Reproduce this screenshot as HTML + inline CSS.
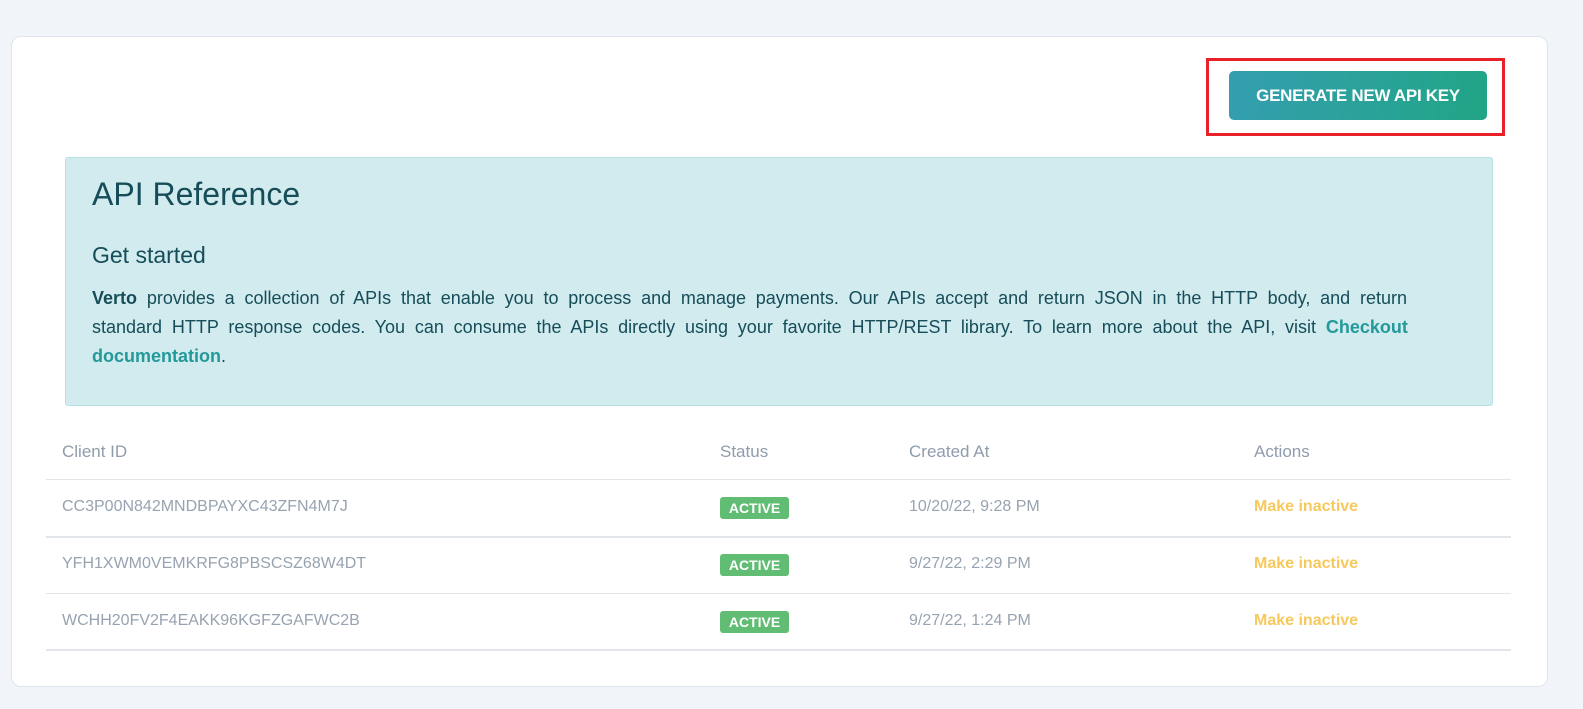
<!DOCTYPE html>
<html><head><style>
body{margin:0;background:#f1f5f9;font-family:"Liberation Sans",sans-serif;width:1583px;height:709px;overflow:hidden;position:relative}
.card{position:absolute;left:11px;top:36px;width:1535px;height:649px;background:#fff;border:1px solid #dfe5ec;border-radius:10px}
.red{position:absolute;left:1206px;top:58px;width:293px;height:72px;border:3px solid #e8202a}
.btn{position:absolute;left:1229px;top:71px;width:258px;height:49px;border-radius:5px;background:linear-gradient(100deg,#349eb0,#21a585);color:#fff;font-weight:bold;font-size:17px;line-height:49px;text-align:center;letter-spacing:-0.3px}
.info{position:absolute;left:65px;top:157px;width:1426px;height:247px;background:#d1ebef;border:1px solid #b7e0e6;border-radius:3px;color:#164d58}
.t{position:absolute;white-space:nowrap}
.hd{color:#8f9cab;font-size:17px}
.cell{color:#97a3b0;font-size:16px}
.badge{position:absolute;background:#62bd74;color:#fff;font-weight:bold;font-size:14px;width:69px;height:22px;line-height:22px;text-align:center;border-radius:3px}
.mk{color:#f7c85b;font-weight:bold;font-size:16px}
.line{position:absolute;left:46px;width:1465px;background:#e2e6eb}
</style></head><body>
<div class="card"></div>
<div class="red"></div>
<div class="btn">GENERATE NEW API KEY</div>
<div class="info"></div>
<div class="t" style="left:92px;top:176px;font-size:32px;color:#164d58">API Reference</div>
<div class="t" style="left:92px;top:242px;font-size:23px;color:#164d58">Get started</div>
<div style="position:absolute;left:92px;top:284px;width:1380px;font-size:18px;line-height:29px;color:#164d58;white-space:nowrap;word-spacing:4.8px"><b>Verto</b> provides a collection of APIs that enable you to process and manage payments. Our APIs accept and return JSON in the HTTP body, and return<br>standard HTTP response codes. You can consume the APIs directly using your favorite HTTP/REST library. To learn more about the API, visit <b style="color:#23999a">Checkout</b><br><b style="color:#23999a">documentation</b>.</div>
<div class="t hd" style="left:62px;top:442px">Client ID</div>
<div class="t hd" style="left:720px;top:442px">Status</div>
<div class="t hd" style="left:909px;top:442px">Created At</div>
<div class="t hd" style="left:1254px;top:442px">Actions</div>
<div class="line" style="top:479px;height:1px"></div>

<div class="t cell" style="left:62px;top:498px">CC3P00N842MNDBPAYXC43ZFN4M7J</div>
<div class="badge" style="left:720px;top:497px">ACTIVE</div>
<div class="t cell" style="left:909px;top:498px">10/20/22, 9:28 PM</div>
<div class="t mk" style="left:1254px;top:498px">Make inactive</div>
<div class="line" style="top:536px;height:2px"></div>

<div class="t cell" style="left:62px;top:555px">YFH1XWM0VEMKRFG8PBSCSZ68W4DT</div>
<div class="badge" style="left:720px;top:554px">ACTIVE</div>
<div class="t cell" style="left:909px;top:555px">9/27/22, 2:29 PM</div>
<div class="t mk" style="left:1254px;top:555px">Make inactive</div>
<div class="line" style="top:593px;height:1px"></div>

<div class="t cell" style="left:62px;top:612px">WCHH20FV2F4EAKK96KGFZGAFWC2B</div>
<div class="badge" style="left:720px;top:611px">ACTIVE</div>
<div class="t cell" style="left:909px;top:612px">9/27/22, 1:24 PM</div>
<div class="t mk" style="left:1254px;top:612px">Make inactive</div>
<div class="line" style="top:649px;height:2px"></div>
</body></html>
